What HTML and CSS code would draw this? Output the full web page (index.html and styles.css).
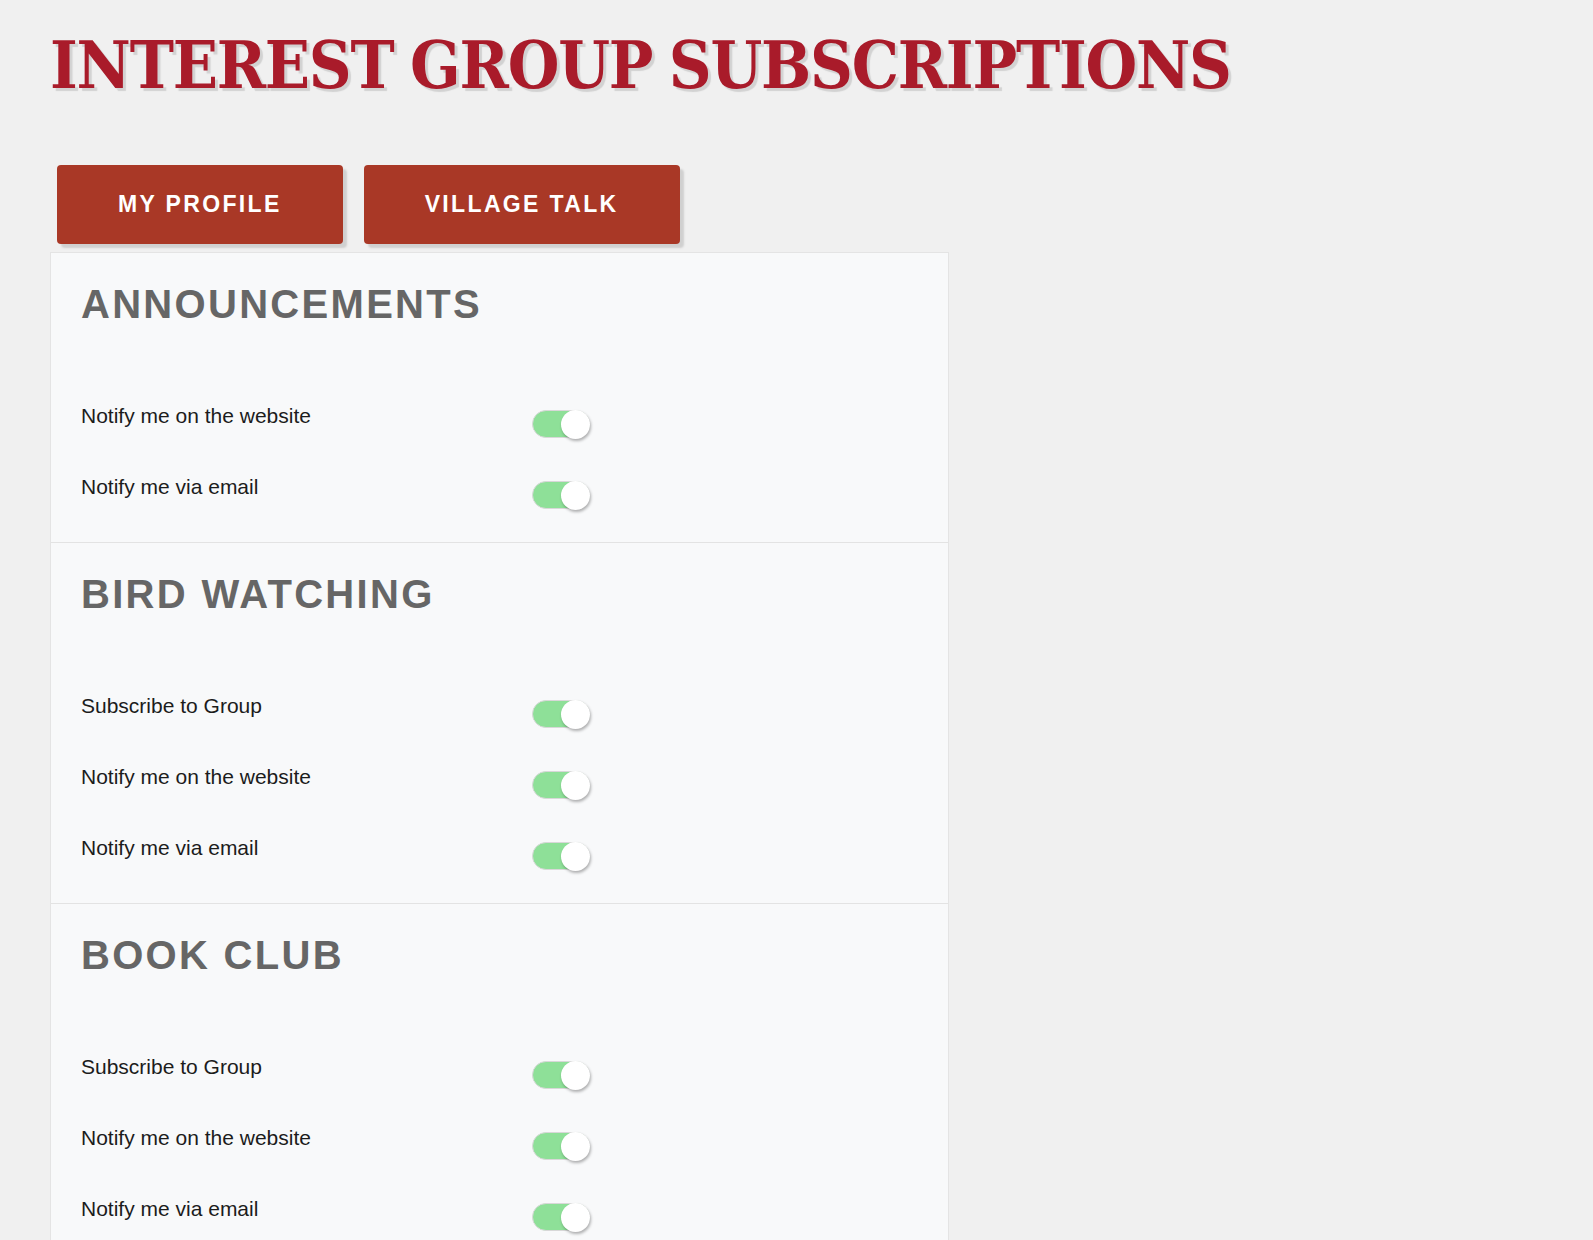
FILE: index.html
```html
<!DOCTYPE html>
<html lang="en">
<head>
<meta charset="utf-8">
<title>Interest Group Subscriptions</title>
<link rel="stylesheet" href="styles.css">
</head>
<body>
<div class="page">
  <h1 class="title">INTEREST GROUP SUBSCRIPTIONS</h1>
  <nav class="tabs">
    <a class="tab" href="#">MY PROFILE</a>
    <a class="tab" href="#">VILLAGE TALK</a>
  </nav>
  <div class="panel">
    <section class="group">
      <h2 class="group-title">ANNOUNCEMENTS</h2>
      <div class="rows">
        <div class="row"><span class="label">Notify me on the website</span><span class="toggle"><span class="knob"></span></span></div>
        <div class="row"><span class="label">Notify me via email</span><span class="toggle"><span class="knob"></span></span></div>
      </div>
    </section>
    <section class="group">
      <h2 class="group-title">BIRD WATCHING</h2>
      <div class="rows">
        <div class="row"><span class="label">Subscribe to Group</span><span class="toggle"><span class="knob"></span></span></div>
        <div class="row"><span class="label">Notify me on the website</span><span class="toggle"><span class="knob"></span></span></div>
        <div class="row"><span class="label">Notify me via email</span><span class="toggle"><span class="knob"></span></span></div>
      </div>
    </section>
    <section class="group">
      <h2 class="group-title">BOOK CLUB</h2>
      <div class="rows">
        <div class="row"><span class="label">Subscribe to Group</span><span class="toggle"><span class="knob"></span></span></div>
        <div class="row"><span class="label">Notify me on the website</span><span class="toggle"><span class="knob"></span></span></div>
        <div class="row"><span class="label">Notify me via email</span><span class="toggle"><span class="knob"></span></span></div>
      </div>
    </section>
  </div>
</div>
</body>
</html>
```

FILE: styles.css
```css
html, body {
  margin: 0;
  padding: 0;
  background: #f0f0f0;
}

.page {
  padding: 0 50px;
  font-family: "Liberation Sans", Arial, sans-serif;
}

.title {
  margin: 25px 0 0 0;
  font-family: "DejaVu Serif Condensed", "DejaVu Serif", serif;
  font-stretch: condensed;
  font-weight: bold;
  font-size: 66px;
  line-height: 80px;
  letter-spacing: -1.2px;
  word-spacing: -3px;
  color: #a91b2a;
  text-shadow: 3px 3px 1px #d2d2d2;
  white-space: nowrap;
}

.tabs {
  display: flex;
  gap: 21px;
  margin: 60px 0 0 7px;
}

.tab {
  display: flex;
  align-items: center;
  height: 79px;
  padding: 0 61px;
  box-sizing: border-box;
  background: #a93826;
  color: #ffffff;
  text-decoration: none;
  font-weight: bold;
  font-size: 23px;
  letter-spacing: 2.35px;
  border-radius: 4px;
  box-shadow: 4px 4px 2px #d0d0d0;
}

.panel {
  width: 899px;
  box-sizing: border-box;
  margin-top: 8px;
  background: #f8f9fa;
  border: 1px solid #e4e4e4;
}

.group {
  padding: 28px 30px 31px 30px;
}

.group + .group {
  border-top: 1px solid #e3e3e3;
}

.group-title {
  margin: 0 0 77px 0;
  font-size: 40px;
  line-height: 46px;
  font-weight: bold;
  letter-spacing: 2.3px;
  color: #666666;
}

.rows {
  display: flex;
  flex-direction: column;
  gap: 35px;
}

.row {
  display: flex;
  align-items: flex-start;
  height: 36px;
}

.label {
  flex: 0 0 451px;
  font-size: 21px;
  line-height: 24px;
  color: #1c1c1c;
}

.toggle {
  display: flex;
  justify-content: flex-end;
  align-items: center;
  width: 58px;
  height: 28px;
  box-sizing: border-box;
  margin-top: 6px;
  border: 1px solid #d8d8d8;
  border-radius: 14px;
  background: #8ee098;
}

.knob {
  width: 29px;
  height: 29px;
  margin: -1px -1px -1px 0;
  border-radius: 50%;
  background: #ffffff;
  box-shadow: 1px 2px 3px rgba(0, 0, 0, 0.3);
}
```
